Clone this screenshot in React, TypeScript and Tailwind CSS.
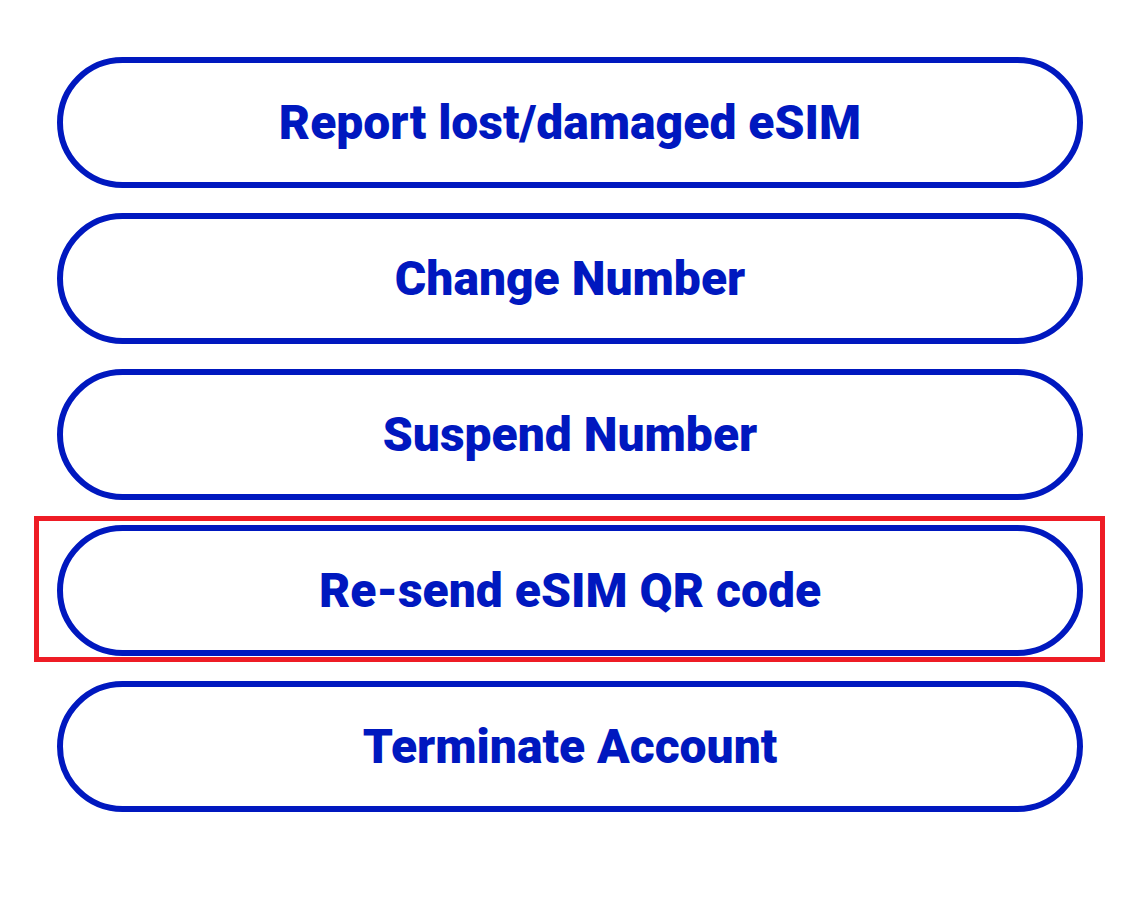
const actions = [
  "Report lost/damaged eSIM",
  "Change Number",
  "Suspend Number",
  "Re-send eSIM QR code",
  "Terminate Account",
]

export default function App() {
  return (
    <div className="min-h-screen bg-white pt-[57px]" style={{ fontFamily: "Roboto, 'Liberation Sans', sans-serif" }}>
      <div className="ml-[57px] flex w-[1026px] flex-col gap-[25px]">
        {actions.map((label, i) => (
          <div key={label} className="relative">
            {/* highlight box around the selected action */}
            {i === 3 && (
              <div className="pointer-events-none absolute -top-[9px] -bottom-[6px] -left-[23px] -right-[22px] border-[5px] border-[#ee1c25]" />
            )}
            <button className="flex h-[131px] w-full items-center justify-center rounded-full border-[6px] border-[#0018bf] bg-white text-[48px] font-black text-[#0018bf]">
              {label}
            </button>
          </div>
        ))}
      </div>
    </div>
  )
}
